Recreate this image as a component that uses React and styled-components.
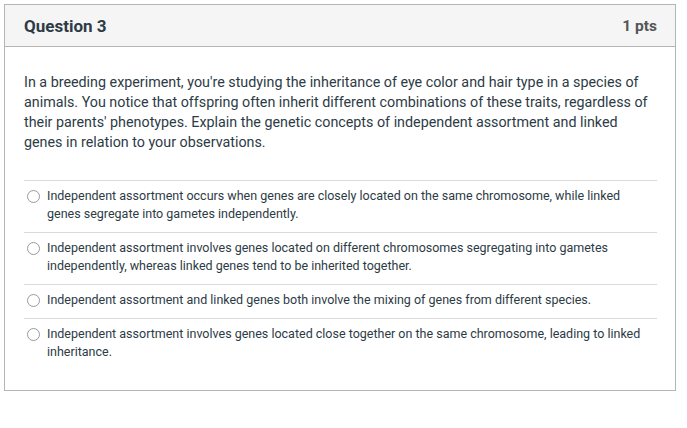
import React from 'react'
import styled, { createGlobalStyle } from 'styled-components'

const GlobalStyle = createGlobalStyle`
  * { box-sizing: border-box; }
  body {
    margin: 0;
    background: #fff;
    font-family: Roboto, "Liberation Sans", Arial, sans-serif;
    color: #2d3b45;
  }
`

const options = [
  'Independent assortment occurs when genes are closely located on the same chromosome, while linked genes segregate into gametes independently.',
  'Independent assortment involves genes located on different chromosomes segregating into gametes independently, whereas linked genes tend to be inherited together.',
  'Independent assortment and linked genes both involve the mixing of genes from different species.',
  'Independent assortment involves genes located close together on the same chromosome, leading to linked inheritance.',
]

function App() {
  return (
    <>
      <GlobalStyle />
      <Page>
        <Card>
          <Header>
            <Title>Question 3</Title>
            <Points>1 pts</Points>
          </Header>
          <Body>
            <Prompt>
              In a breeding experiment, you're studying the inheritance of eye color and hair type in a species of
              animals. You notice that offspring often inherit different combinations of these traits, regardless of
              their parents' phenotypes. Explain the genetic concepts of independent assortment and linked
              genes in relation to your observations.
            </Prompt>
            <Answers>
              {options.map((text, i) => (
                <Answer key={i}>
                  <Radio type="radio" name="q3" />
                  <AnswerText>{text}</AnswerText>
                </Answer>
              ))}
            </Answers>
          </Body>
        </Card>
      </Page>
    </>
  )
}

const Page = styled.div`
  padding: 4px 11px 0 4px;
`

const Card = styled.div`
  border: 1px solid #b5b5b5;
  background: #fff;
`

const Header = styled.div`
  display: flex;
  justify-content: space-between;
  align-items: center;
  height: 42px;
  padding: 0 18px 0 19px;
  background: #f5f5f5;
  border-bottom: 1px solid #b5b5b5;
`

const Title = styled.h2`
  margin: 0;
  font-size: 17px;
  font-weight: 700;
  color: #2d3b45;
`

const Points = styled.span`
  font-size: 15.5px;
  font-weight: 700;
  color: #555;
`

const Body = styled.div`
  padding: 25px 18px 20px 19px;
`

const Prompt = styled.p`
  margin: 0 0 28px;
  font-size: 14.3px;
  line-height: 20px;
  color: #2d3b45;
`

const Answers = styled.div`
  border-top: 1px solid #dadada;
`

const Answer = styled.label`
  display: flex;
  align-items: flex-start;
  gap: 7px;
  padding: 6px 12px 9px 3px;
  border-bottom: 1px solid #dadada;
  &:last-child { border-bottom: none; }
`

const Radio = styled.input`
  appearance: none;
  flex: none;
  width: 13px;
  height: 13px;
  margin: 3px 0 0 0;
  border: 1px solid #9a9a9a;
  border-radius: 50%;
  background: #fff;
`

const AnswerText = styled.span`
  font-size: 12.5px;
  line-height: 18px;
  color: #2d3b45;
`

export default App
